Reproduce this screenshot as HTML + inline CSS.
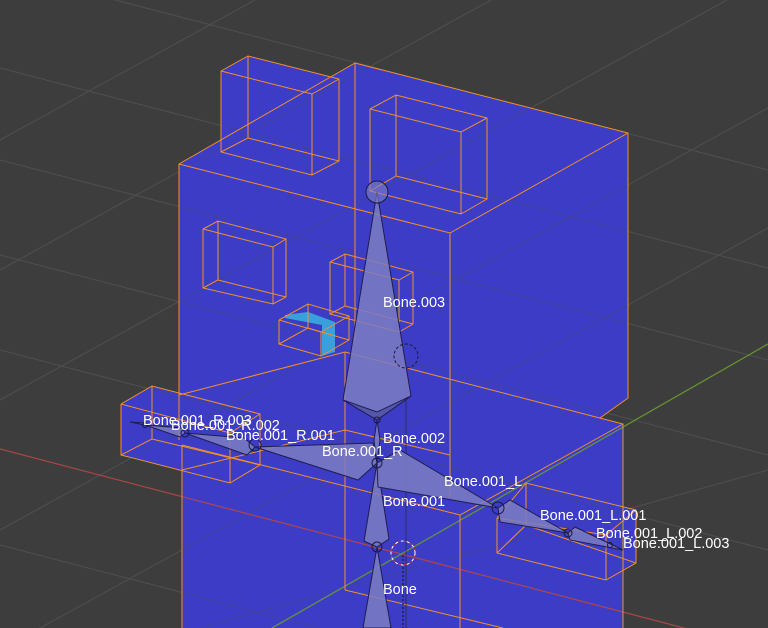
<!DOCTYPE html>
<html><head><style>
html,body{margin:0;padding:0;background:#3d3d3d;overflow:hidden;width:768px;height:628px;}
svg{display:block;}
text{font-family:"Liberation Sans","DejaVu Sans",sans-serif;font-size:14.5px;fill:#fff;}
</style></head><body>
<svg width="768" height="628" viewBox="0 0 768 628" xmlns="http://www.w3.org/2000/svg">
<rect width="768" height="628" fill="#3d3d3d"/>
<g id="grid" stroke="#4f4f4f" stroke-width="1">
<line x1="0" y1="-30" x2="768" y2="170"/>
<line x1="0" y1="68" x2="768" y2="268"/>
<line x1="0" y1="160" x2="768" y2="360"/>
<line x1="0" y1="255" x2="768" y2="455"/>
<line x1="0" y1="350" x2="768" y2="550"/>
<line x1="0" y1="545" x2="768" y2="745"/>
<line x1="0" y1="270" x2="491" y2="0"/>
<line x1="0" y1="400" x2="727" y2="0"/>
<line x1="0" y1="530" x2="768" y2="108"/>
<line x1="0" y1="650" x2="768" y2="228"/>
<line x1="200" y1="628" x2="768" y2="470"/>
<line x1="0" y1="140" x2="255" y2="0"/>
</g>
<g fill="#3c3cc6" stroke="none">
<polygon points="179,164 355,63 628,133 628,398 600,418 623,424 623,628 182,628 182,470 179,440"/>
<polygon points="221,71 248,56 339,79 339,161 312,175 221,152"/>
<polygon points="121,404 152,386 260,414 260,465 230,483 121,455"/>
<polygon points="497,518 526,483 636,510 636,563 606,580 497,553"/>
</g>
<use href="#grid" opacity="0.35"/>
<line x1="0" y1="449" x2="768" y2="650" stroke="#b04848" stroke-width="1.3" opacity="0.9"/>
<line x1="272" y1="628" x2="768" y2="344" stroke="#6a9a30" stroke-width="1.3" opacity="0.9"/>
<polygon points="285,315 308,312 335,322 335,352 322,356 322,325 285,318" fill="#3aa0dc"/>
<g fill="none" stroke="#f0902c" stroke-width="1">
<polyline points="179,440 179,164 355,63 628,133 628,398 600,418"/>
<line x1="355" y1="63" x2="355" y2="340"/>
<polyline points="179,164 450,233 628,133"/>
<line x1="450" y1="233" x2="450" y2="497"/>
<polyline points="179,395 345,352 623,424 623,628"/>
<polyline points="182,445 460,515 623,424"/>
<line x1="182" y1="445" x2="182" y2="628"/>
<line x1="460" y1="515" x2="460" y2="628"/>
<line x1="345" y1="352" x2="345" y2="590"/>
<polyline points="182,470 345,430 450,455"/>
<line x1="345" y1="590" x2="503" y2="628"/>
<polyline points="221,71 248,56 339,79 339,161 312,175 221,152 221,71"/>
<polyline points="221,71 312,94 339,79"/><line x1="312" y1="94" x2="312" y2="175"/>
<polyline points="248,56 248,138 221,152"/><line x1="248" y1="138" x2="339" y2="161"/>
<polyline points="370,109 396,95 487,118 487,199 461,214 370,191 370,109"/>
<polyline points="370,109 461,132 487,118"/><line x1="461" y1="132" x2="461" y2="214"/>
<polyline points="396,95 396,176 370,191"/><line x1="396" y1="176" x2="487" y2="199"/>
<polyline points="203,229 218,221 286,239 286,297 273,304 203,288 203,229"/>
<polyline points="203,229 273,247 286,239"/><line x1="273" y1="247" x2="273" y2="304"/>
<polyline points="218,221 218,280 203,288"/><line x1="218" y1="280" x2="286" y2="297"/>
<polyline points="330,262 345,254 413,272 413,324 399,332 330,314 330,262"/>
<polyline points="330,262 399,280 413,272"/><line x1="399" y1="280" x2="399" y2="332"/>
<polyline points="345,254 345,306 330,314"/><line x1="345" y1="306" x2="413" y2="324"/>
<polyline points="279,320 308,304 349,316 349,340 321,356 279,344 279,320"/>
<polyline points="279,320 321,332 349,316"/><line x1="321" y1="332" x2="321" y2="356"/>
<polyline points="308,304 308,328 279,344"/><line x1="308" y1="328" x2="349" y2="340"/>
<polyline points="121,404 152,386 260,414 260,465 230,483 121,455 121,404"/>
<polyline points="121,404 230,433 260,414"/><line x1="230" y1="433" x2="230" y2="483"/>
<polyline points="152,386 152,439 121,455"/><line x1="152" y1="439" x2="260" y2="465"/>
<polyline points="497,518 526,483 636,510 636,563 606,580 497,553 497,518"/>
<polyline points="497,518 606,535 636,510"/><line x1="606" y1="535" x2="606" y2="580"/>
<polyline points="526,483 526,525 497,553"/><line x1="526" y1="525" x2="636" y2="563"/>
</g>
<line x1="406" y1="380" x2="406" y2="628" stroke="#222" stroke-width="0.8" opacity="0.7"/>
<line x1="403" y1="555" x2="403" y2="628" stroke="#111" stroke-width="1" stroke-dasharray="2,2"/>
<g stroke="#1e1e50" stroke-width="1" fill="#7c7cc2" fill-opacity="0.85">
<polygon points="377,192 411,396 377,420 343,400"/>
<polygon points="343,400 377,420 411,396 377,412" fill="#5050a8"/>
<polygon points="377,420 380,440 377,463 374,440"/>
<polygon points="377,463 389,539 377,547 364,541"/>
<polygon points="377,547 391,628 363,628"/>
<polygon points="377,463 373,443 255,447 358,480"/>
<polygon points="377,463 400,450 498,508 378,487"/>
<polygon points="255,447 247,455 185,433 244,438"/>
<polygon points="185,433 180,437 145,425 182,428"/>
<polygon points="145,425 130,422 144,423"/>
<polygon points="498,508 510,500 568,533 500,522"/>
<polygon points="568,533 575,527 623,550 570,540"/>
</g>
<g fill="none" stroke="#1a1a40" stroke-width="1">
<circle cx="377" cy="192" r="11" fill="#8080c8" fill-opacity="0.6"/>
<circle cx="377" cy="420" r="3"/>
<circle cx="377" cy="463" r="5"/>
<circle cx="377" cy="547" r="5"/>
<circle cx="255" cy="445" r="6"/>
<circle cx="185" cy="433" r="4"/>
<circle cx="145" cy="425" r="2.5"/>
<circle cx="498" cy="508" r="6"/>
<circle cx="568" cy="533" r="4"/>
<circle cx="610" cy="545" r="2.5"/>
<circle cx="406" cy="356" r="12" stroke-dasharray="3,2"/>
</g>
<circle cx="403" cy="553" r="12" fill="none" stroke="#fff" stroke-width="1" stroke-dasharray="3,3"/>
<circle cx="403" cy="553" r="12" fill="none" stroke="#d03030" stroke-width="1" stroke-dasharray="3,3" stroke-dashoffset="3"/>
<text x="383" y="307">Bone.003</text>
<text x="383" y="443">Bone.002</text>
<text x="322" y="456">Bone.001_R</text>
<text x="444" y="486">Bone.001_L</text>
<text x="383" y="506">Bone.001</text>
<text x="540" y="520">Bone.001_L.001</text>
<text x="596" y="538">Bone.001_L.002</text>
<text x="623" y="548">Bone.001_L.003</text>
<text x="383" y="594">Bone</text>
<text x="143" y="425">Bone.001_R.003</text>
<text x="171" y="430">Bone.001_R.002</text>
<text x="226" y="440">Bone.001_R.001</text>
</svg>
</body></html>
